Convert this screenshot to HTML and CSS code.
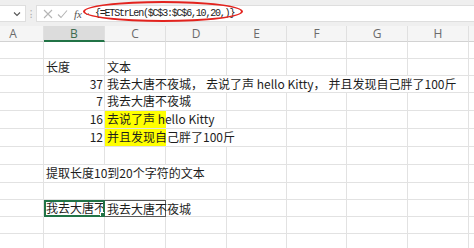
FILE: index.html
```html
<!DOCTYPE html>
<html lang="zh-CN">
<head>
    <meta charset="UTF-8">
    <title>ETStrLen</title>
    <link rel="stylesheet" href="styles.css">
</head>
<body>
    <!-- Formula bar -->
    <div class="toolbar">
        <div class="name-box">
            <svg class="chev" width="8" height="6" viewBox="0 0 8 6"><path d="M1 1.5 L4 4.5 L7 1.5" fill="none" stroke="#555" stroke-width="1.1"/></svg>
        </div>
        <span class="grip">⁝</span>
        <div class="formula-box">
            <svg class="btn-icon" width="10" height="10" viewBox="0 0 10 10"><path d="M1 1 L9 9 M9 1 L1 9" stroke="#b5b5b5" stroke-width="1.1"/></svg>
            <svg class="btn-icon" width="11" height="10" viewBox="0 0 11 10"><path d="M1 5.5 L4 8.5 L10 1.5" fill="none" stroke="#b5b5b5" stroke-width="1.1"/></svg>
            <span class="fx">fx</span>
            <svg class="fx-chev" width="6" height="4" viewBox="0 0 6 4"><path d="M1 1 L3 3 L5 1" fill="none" stroke="#999" stroke-width="0.9"/></svg>
            <span class="formula">{=ETStrLen($C$3:$C$6,10,20,)}</span>
        </div>
        <div class="mark"></div>
    </div>

    <!-- Sheet -->
    <div class="sheet">
        <div class="hd">A</div><div class="hd hd-sel">B</div><div class="hd">C</div><div class="hd">D</div><div class="hd">E</div><div class="hd">F</div><div class="hd">G</div><div class="hd">H</div><div class="hd"></div>

        <div class="c"></div><div class="c"></div><div class="c"></div><div class="c"></div><div class="c"></div><div class="c"></div><div class="c"></div><div class="c"></div><div class="c"></div>

        <div class="c"></div><div class="c">长度</div><div class="c">文本</div><div class="c"></div><div class="c"></div><div class="c"></div><div class="c"></div><div class="c"></div><div class="c"></div>

        <div class="c"></div><div class="c num">37</div><div class="c span-6">我去大唐不夜城<span class="punct">，</span>去说了声 hello Kitty<span class="punct">，</span>并且发现自己胖了100斤</div><div class="c"></div>

        <div class="c"></div><div class="c num">7</div><div class="c span-2">我去大唐不夜城</div><div class="c"></div><div class="c"></div><div class="c"></div><div class="c"></div><div class="c"></div>

        <div class="c"></div><div class="c num">16</div><div class="c span-2 hl">去说了声 hello Kitty</div><div class="c"></div><div class="c"></div><div class="c"></div><div class="c"></div><div class="c"></div>

        <div class="c"></div><div class="c num">12</div><div class="c span-3 hl">并且发现自己胖了100斤</div><div class="c"></div><div class="c"></div><div class="c"></div><div class="c"></div>

        <div class="c"></div><div class="c"></div><div class="c"></div><div class="c"></div><div class="c"></div><div class="c"></div><div class="c"></div><div class="c"></div><div class="c"></div>

        <div class="c"></div><div class="c span-3">提取长度10到20个字符的文本</div><div class="c"></div><div class="c"></div><div class="c"></div><div class="c"></div><div class="c"></div>

        <div class="c"></div><div class="c"></div><div class="c"></div><div class="c"></div><div class="c"></div><div class="c"></div><div class="c"></div><div class="c"></div><div class="c"></div>

        <div class="c"></div><div class="c active">我去大唐不</div><div class="c boxed">我去大唐不夜城</div><div class="c"></div><div class="c"></div><div class="c"></div><div class="c"></div><div class="c"></div><div class="c"></div>

        <div class="c"></div><div class="c"></div><div class="c"></div><div class="c"></div><div class="c"></div><div class="c"></div><div class="c"></div><div class="c"></div><div class="c"></div>

        <div class="c"></div><div class="c"></div><div class="c"></div><div class="c"></div><div class="c"></div><div class="c"></div><div class="c"></div><div class="c"></div><div class="c"></div>
    </div>
</body>
</html>
```

FILE: styles.css
```css
body {
    margin: 0;
    width: 474px;
    height: 248px;
    overflow: hidden;
    background: #fff;
    font-family: "Noto Sans CJK SC", "Noto Sans", sans-serif;
    color: #1d1d1d;
}

/* Formula bar */
.toolbar {
    position: relative;
    display: flex;
    align-items: stretch;
    height: 17px;
    padding: 5px 0 4px;
    background: #efefef;
}

.name-box {
    width: 26px;
    background: #fff;
    border: 1px solid #dedede;
    border-left: none;
    box-sizing: border-box;
    display: flex;
    align-items: center;
    justify-content: flex-end;
    padding-right: 4px;
}

.grip {
    width: 10px;
    font-size: 10px;
    line-height: 17px;
    color: #aaa;
    text-align: center;
}

.formula-box {
    flex: 1;
    display: flex;
    align-items: center;
    background: #fff;
    border: 1px solid #dedede;
    border-right: none;
    box-sizing: border-box;
    padding-left: 3px;
}

.btn-icon {
    margin-left: 3px;
    margin-right: 1px;
}

.fx {
    margin-left: 5px;
    font-family: "Liberation Serif", serif;
    font-style: italic;
    font-size: 11px;
    color: #555;
}

.fx-chev {
    margin-left: 2px;
}

.formula {
    margin-left: 5px;
    font-family: "Liberation Mono", monospace;
    font-size: 10px;
    letter-spacing: -1.2px;
    color: #222;
}

.mark {
    position: absolute;
    left: 83px;
    top: 1px;
    width: 160px;
    height: 21px;
    border: 2px solid #e3231e;
    border-radius: 50%;
    box-sizing: border-box;
}

/* Sheet grid */
.sheet {
    display: grid;
    grid-template-columns: 61px 61px 61px 61px 60px 60px 61px 61px 61px;
    grid-template-rows: 16px 17px 17px 17px 18px 18px 18px 18px 18px 17px 17px 17px 17px;
    margin-left: -17px;
}

.hd {
    background: #f5f5f5;
    border-right: 1px solid #e0e0e0;
    border-bottom: 1px solid #d2d2d2;
    box-sizing: border-box;
    font-family: "Open Sans", sans-serif;
    font-size: 12px;
    line-height: 15px;
    color: #6b6b6b;
    text-align: center;
}

.hd-sel {
    background: #dcdcdc;
    border-bottom: 2px solid #217346;
    color: #3d6b50;
}

.c {
    position: relative;
    border-right: 1px solid #e2e2e2;
    border-bottom: 1px solid #e2e2e2;
    box-sizing: border-box;
    font-size: 12px;
    line-height: 16px;
    padding-left: 2px;
    white-space: nowrap;
    text-spacing-trim: space-all;
}

.punct {
    display: inline-block;
    width: 15px;
}

.num {
    text-align: right;
    padding-right: 1px;
}

.span-2 { grid-column: span 2; }
.span-3 { grid-column: span 3; }
.span-6 { grid-column: span 6; }

.hl {
    background: linear-gradient(#ffff00, #ffff00) 0 0 / 61px 100% no-repeat;
}

.active {
    overflow: hidden;
    outline: 2px solid #217346;
    outline-offset: -2px;
    z-index: 2;
}

.active::after {
    content: "";
    position: absolute;
    right: -2px;
    bottom: -2px;
    width: 4px;
    height: 4px;
    background: #217346;
    border: 1px solid #fff;
}

.boxed {
    overflow: visible;
    border: 1px solid #5a5a5a;
    border-left: none;
    z-index: 1;
}
```
